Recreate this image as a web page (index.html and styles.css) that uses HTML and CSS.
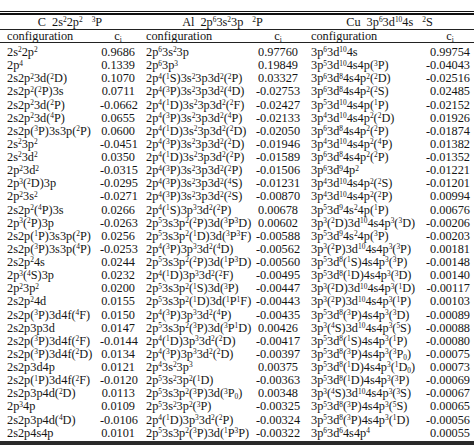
FILE: index.html
```html
<!DOCTYPE html>
<html>
<head>
<meta charset="utf-8">
<link rel="stylesheet" href="styles.css">
</head>
<body>
<div class="sheet">
  <div class="rule-top"></div>
  <div class="groups">
    <div class="grp">C<span class="gap"></span>2s<sup>2</sup>2p<sup>2</sup><span class="gap2"></span><sup>3</sup>P</div>
    <div class="grp">Al<span class="gap"></span>2p<sup>6</sup>3s<sup>2</sup>3p<span class="gap2"></span><sup>2</sup>P</div>
    <div class="grp">Cu<span class="gap"></span>3p<sup>6</sup>3d<sup>10</sup>4s<span class="gap2"></span><sup>2</sup>S</div>
  </div>
  <div class="row head">
    <div class="cfg">configuration</div><div class="ci"><span class="cih">c<sub>i</sub></span></div>
    <div class="cfg">configuration</div><div class="ci"><span class="cih w">c<sub>i</sub></span></div>
    <div class="cfg">configuration</div><div class="ci"><span class="cih w">c<sub>i</sub></span></div>
  </div>
  <div class="body">
    <div class="row"><div class="cfg">2s<sup>2</sup>2p<sup>2</sup></div><div class="ci">0.9686</div><div class="cfg">2p<sup>6</sup>3s<sup>2</sup>3p</div><div class="ci">0.97760</div><div class="cfg">3p<sup>6</sup>3d<sup>10</sup>4s</div><div class="ci">0.99754</div></div>
    <div class="row"><div class="cfg">2p<sup>4</sup></div><div class="ci">0.1339</div><div class="cfg">2p<sup>6</sup>3p<sup>3</sup></div><div class="ci">0.19849</div><div class="cfg">3p<sup>5</sup>3d<sup>10</sup>4s4p(<sup>3</sup>P)</div><div class="ci">-0.04043</div></div>
    <div class="row"><div class="cfg">2s2p<sup>2</sup>3d(<sup>2</sup>D)</div><div class="ci">0.1070</div><div class="cfg">2p<sup>4</sup>(<sup>1</sup>S)3s<sup>2</sup>3p3d<sup>2</sup>(<sup>2</sup>P)</div><div class="ci">0.03327</div><div class="cfg">3p<sup>6</sup>3d<sup>8</sup>4s4p<sup>2</sup>(<sup>2</sup>D)</div><div class="ci">-0.02516</div></div>
    <div class="row"><div class="cfg">2s2p<sup>2</sup>(<sup>2</sup>P)3s</div><div class="ci">0.0711</div><div class="cfg">2p<sup>4</sup>(<sup>3</sup>P)3s<sup>2</sup>3p3d<sup>2</sup>(<sup>4</sup>D)</div><div class="ci">-0.02753</div><div class="cfg">3p<sup>6</sup>3d<sup>8</sup>4s4p<sup>2</sup>(<sup>2</sup>S)</div><div class="ci">0.02485</div></div>
    <div class="row"><div class="cfg">2s2p<sup>2</sup>3d(<sup>2</sup>P)</div><div class="ci">-0.0662</div><div class="cfg">2p<sup>4</sup>(<sup>1</sup>D)3s<sup>2</sup>3p3d<sup>2</sup>(<sup>2</sup>F)</div><div class="ci">-0.02427</div><div class="cfg">3p<sup>5</sup>3d<sup>10</sup>4s4p(<sup>1</sup>P)</div><div class="ci">-0.02152</div></div>
    <div class="row"><div class="cfg">2s2p<sup>2</sup>3d(<sup>4</sup>P)</div><div class="ci">0.0655</div><div class="cfg">2p<sup>4</sup>(<sup>3</sup>P)3s<sup>2</sup>3p3d<sup>2</sup>(<sup>4</sup>P)</div><div class="ci">-0.02133</div><div class="cfg">3p<sup>4</sup>3d<sup>10</sup>4s4p<sup>2</sup>(<sup>2</sup>D)</div><div class="ci">0.01926</div></div>
    <div class="row"><div class="cfg">2s2p(<sup>3</sup>P)3s3p(<sup>2</sup>P)</div><div class="ci">0.0600</div><div class="cfg">2p<sup>4</sup>(<sup>1</sup>D)3s<sup>2</sup>3p3d<sup>2</sup>(<sup>2</sup>D)</div><div class="ci">-0.02050</div><div class="cfg">3p<sup>6</sup>3d<sup>8</sup>4s4p<sup>2</sup>(<sup>2</sup>P)</div><div class="ci">-0.01874</div></div>
    <div class="row"><div class="cfg">2s<sup>2</sup>3p<sup>2</sup></div><div class="ci">-0.0451</div><div class="cfg">2p<sup>4</sup>(<sup>3</sup>P)3s<sup>2</sup>3p3d<sup>2</sup>(<sup>2</sup>D)</div><div class="ci">-0.01946</div><div class="cfg">3p<sup>4</sup>3d<sup>10</sup>4s4p<sup>2</sup>(<sup>4</sup>P)</div><div class="ci">0.01382</div></div>
    <div class="row"><div class="cfg">2s<sup>2</sup>3d<sup>2</sup></div><div class="ci">0.0350</div><div class="cfg">2p<sup>4</sup>(<sup>1</sup>D)3s<sup>2</sup>3p3d<sup>2</sup>(<sup>2</sup>P)</div><div class="ci">-0.01589</div><div class="cfg">3p<sup>6</sup>3d<sup>8</sup>4s4p<sup>2</sup>(<sup>2</sup>P)</div><div class="ci">-0.01352</div></div>
    <div class="row"><div class="cfg">2p<sup>2</sup>3d<sup>2</sup></div><div class="ci">-0.0315</div><div class="cfg">2p<sup>4</sup>(<sup>3</sup>P)3s<sup>2</sup>3p3d<sup>2</sup>(<sup>2</sup>P)</div><div class="ci">-0.01506</div><div class="cfg">3p<sup>6</sup>3d<sup>9</sup>4p<sup>2</sup></div><div class="ci">-0.01221</div></div>
    <div class="row"><div class="cfg">2p<sup>3</sup>(<sup>2</sup>D)3p</div><div class="ci">-0.0295</div><div class="cfg">2p<sup>4</sup>(<sup>3</sup>P)3s<sup>2</sup>3p3d<sup>2</sup>(<sup>4</sup>S)</div><div class="ci">-0.01231</div><div class="cfg">3p<sup>4</sup>3d<sup>10</sup>4s4p<sup>2</sup>(<sup>2</sup>S)</div><div class="ci">-0.01201</div></div>
    <div class="row"><div class="cfg">2p<sup>2</sup>3s<sup>2</sup></div><div class="ci">-0.0271</div><div class="cfg">2p<sup>4</sup>(<sup>3</sup>P)3s<sup>2</sup>3p3d<sup>2</sup>(<sup>2</sup>S)</div><div class="ci">-0.00870</div><div class="cfg">3p<sup>4</sup>3d<sup>10</sup>4s4p<sup>2</sup>(<sup>2</sup>P)</div><div class="ci">0.00994</div></div>
    <div class="row"><div class="cfg">2s2p<sup>2</sup>(<sup>4</sup>P)3s</div><div class="ci">0.0266</div><div class="cfg">2p<sup>4</sup>(<sup>1</sup>S)3p<sup>3</sup>3d<sup>2</sup>(<sup>2</sup>P)</div><div class="ci">0.00678</div><div class="cfg">3p<sup>5</sup>3d<sup>9</sup>4s<sup>2</sup>4p(<sup>1</sup>P)</div><div class="ci">0.00676</div></div>
    <div class="row"><div class="cfg">2p<sup>3</sup>(<sup>2</sup>P)3p</div><div class="ci">-0.0263</div><div class="cfg">2p<sup>5</sup>3s3p<sup>2</sup>(<sup>2</sup>P)3d(<sup>3</sup>P<sup>3</sup>D)</div><div class="ci">0.00602</div><div class="cfg">3p<sup>3</sup>(<sup>2</sup>D)3d<sup>10</sup>4s4p<sup>3</sup>(<sup>3</sup>D)</div><div class="ci">-0.00206</div></div>
    <div class="row"><div class="cfg">2s2p(<sup>1</sup>P)3s3p(<sup>2</sup>P)</div><div class="ci">0.0256</div><div class="cfg">2p<sup>5</sup>3s3p<sup>2</sup>(<sup>1</sup>D)3d(<sup>3</sup>P<sup>3</sup>F)</div><div class="ci">-0.00588</div><div class="cfg">3p<sup>5</sup>3d<sup>9</sup>4s<sup>2</sup>4p(<sup>3</sup>P)</div><div class="ci">-0.00203</div></div>
    <div class="row"><div class="cfg">2s2p(<sup>3</sup>P)3s3p(<sup>4</sup>P)</div><div class="ci">-0.0253</div><div class="cfg">2p<sup>4</sup>(<sup>3</sup>P)3p<sup>3</sup>3d<sup>2</sup>(<sup>4</sup>D)</div><div class="ci">-0.00562</div><div class="cfg">3p<sup>3</sup>(<sup>2</sup>P)3d<sup>10</sup>4s4p<sup>3</sup>(<sup>3</sup>P)</div><div class="ci">0.00181</div></div>
    <div class="row"><div class="cfg">2s2p<sup>2</sup>4s</div><div class="ci">0.0244</div><div class="cfg">2p<sup>5</sup>3s3p<sup>2</sup>(<sup>2</sup>P)3d(<sup>1</sup>P<sup>3</sup>D)</div><div class="ci">-0.00560</div><div class="cfg">3p<sup>5</sup>3d<sup>8</sup>(<sup>1</sup>S)4s4p<sup>3</sup>(<sup>3</sup>P)</div><div class="ci">-0.00148</div></div>
    <div class="row"><div class="cfg">2p<sup>3</sup>(<sup>4</sup>S)3p</div><div class="ci">0.0232</div><div class="cfg">2p<sup>4</sup>(<sup>1</sup>D)3p<sup>3</sup>3d<sup>2</sup>(<sup>2</sup>F)</div><div class="ci">-0.00495</div><div class="cfg">3p<sup>5</sup>3d<sup>8</sup>(<sup>1</sup>D)4s4p<sup>3</sup>(<sup>3</sup>D)</div><div class="ci">0.00140</div></div>
    <div class="row"><div class="cfg">2p<sup>2</sup>3p<sup>2</sup></div><div class="ci">0.0200</div><div class="cfg">2p<sup>5</sup>3s3p<sup>2</sup>(<sup>1</sup>S)3d(<sup>3</sup>P)</div><div class="ci">-0.00447</div><div class="cfg">3p<sup>3</sup>(<sup>2</sup>D)3d<sup>10</sup>4s4p<sup>3</sup>(<sup>1</sup>D)</div><div class="ci">-0.00117</div></div>
    <div class="row"><div class="cfg">2s2p<sup>2</sup>4d</div><div class="ci">0.0155</div><div class="cfg">2p<sup>5</sup>3s3p<sup>2</sup>(<sup>1</sup>D)3d(<sup>1</sup>P<sup>1</sup>F)</div><div class="ci">-0.00443</div><div class="cfg">3p<sup>3</sup>(<sup>2</sup>P)3d<sup>10</sup>4s4p<sup>3</sup>(<sup>1</sup>P)</div><div class="ci">0.00103</div></div>
    <div class="row"><div class="cfg">2s2p(<sup>3</sup>P)3d4f(<sup>4</sup>F)</div><div class="ci">0.0150</div><div class="cfg">2p<sup>4</sup>(<sup>3</sup>P)3p<sup>3</sup>3d<sup>2</sup>(<sup>4</sup>P)</div><div class="ci">-0.00435</div><div class="cfg">3p<sup>5</sup>3d<sup>8</sup>(<sup>3</sup>P)4s4p<sup>3</sup>(<sup>3</sup>D)</div><div class="ci">-0.00089</div></div>
    <div class="row"><div class="cfg">2s2p3p3d</div><div class="ci">0.0147</div><div class="cfg">2p<sup>5</sup>3s3p<sup>2</sup>(<sup>3</sup>P)3d(<sup>3</sup>P<sup>1</sup>D)</div><div class="ci">0.00426</div><div class="cfg">3p<sup>3</sup>(<sup>4</sup>S)3d<sup>10</sup>4s4p<sup>3</sup>(<sup>5</sup>S)</div><div class="ci">-0.00088</div></div>
    <div class="row"><div class="cfg">2s2p(<sup>3</sup>P)3d4f(<sup>2</sup>F)</div><div class="ci">-0.0144</div><div class="cfg">2p<sup>4</sup>(<sup>1</sup>D)3p<sup>3</sup>3d<sup>2</sup>(<sup>2</sup>D)</div><div class="ci">-0.00417</div><div class="cfg">3p<sup>5</sup>3d<sup>8</sup>(<sup>1</sup>S)4s4p<sup>3</sup>(<sup>1</sup>P)</div><div class="ci">-0.00080</div></div>
    <div class="row"><div class="cfg">2s2p(<sup>3</sup>P)3d4f(<sup>2</sup>D)</div><div class="ci">0.0134</div><div class="cfg">2p<sup>4</sup>(<sup>3</sup>P)3p<sup>3</sup>3d<sup>2</sup>(<sup>2</sup>D)</div><div class="ci">-0.00397</div><div class="cfg">3p<sup>5</sup>3d<sup>8</sup>(<sup>3</sup>P)4s4p<sup>3</sup>(<sup>3</sup>P<sub>0</sub>)</div><div class="ci">-0.00075</div></div>
    <div class="row"><div class="cfg">2s2p3d4p</div><div class="ci">0.0121</div><div class="cfg">2p<sup>4</sup>3s<sup>2</sup>3p<sup>3</sup></div><div class="ci">0.00375</div><div class="cfg">3p<sup>5</sup>3d<sup>8</sup>(<sup>1</sup>D)4s4p<sup>3</sup>(<sup>1</sup>D<sub>0</sub>)</div><div class="ci">0.00073</div></div>
    <div class="row"><div class="cfg">2s2p(<sup>1</sup>P)3d4f(<sup>2</sup>F)</div><div class="ci">-0.0120</div><div class="cfg">2p<sup>5</sup>3s<sup>2</sup>3p<sup>2</sup>(<sup>1</sup>D)</div><div class="ci">-0.00363</div><div class="cfg">3p<sup>5</sup>3d<sup>8</sup>(<sup>1</sup>D)4s4p<sup>3</sup>(<sup>3</sup>P)</div><div class="ci">-0.00069</div></div>
    <div class="row"><div class="cfg">2s2p3p4d(<sup>2</sup>D)</div><div class="ci">0.0113</div><div class="cfg">2p<sup>5</sup>3s3p<sup>2</sup>(<sup>3</sup>P)3d(<sup>3</sup>P<sub>0</sub>)</div><div class="ci">0.00348</div><div class="cfg">3p<sup>3</sup>(<sup>4</sup>S)3d<sup>10</sup>4s4p<sup>3</sup>(<sup>3</sup>S)</div><div class="ci">-0.00067</div></div>
    <div class="row"><div class="cfg">2p<sup>3</sup>4p</div><div class="ci">0.0109</div><div class="cfg">2p<sup>5</sup>3s<sup>2</sup>3p<sup>2</sup>(<sup>3</sup>P)</div><div class="ci">-0.00325</div><div class="cfg">3p<sup>5</sup>3d<sup>8</sup>(<sup>3</sup>P)4s4p<sup>3</sup>(<sup>5</sup>S)</div><div class="ci">0.00065</div></div>
    <div class="row"><div class="cfg">2s2p3p4d(<sup>4</sup>D)</div><div class="ci">-0.0106</div><div class="cfg">2p<sup>4</sup>(<sup>1</sup>D)3p<sup>3</sup>3d<sup>2</sup>(<sup>2</sup>P)</div><div class="ci">-0.00324</div><div class="cfg">3p<sup>5</sup>3d<sup>8</sup>(<sup>3</sup>P)4s4p<sup>3</sup>(<sup>1</sup>D)</div><div class="ci">-0.00056</div></div>
    <div class="row"><div class="cfg">2s2p4s4p</div><div class="ci">0.0101</div><div class="cfg">2p<sup>5</sup>3s3p<sup>2</sup>(<sup>3</sup>P)3d(<sup>1</sup>P<sup>3</sup>P)</div><div class="ci">-0.00322</div><div class="cfg">3p<sup>6</sup>3d<sup>6</sup>4s4p<sup>4</sup></div><div class="ci">0.00055</div></div>
  </div>
  <div class="rule-bottom"></div>
</div>
</body>
</html>
```
FILE: styles.css
```css
html, body {
  margin: 0;
  padding: 0;
  background: #ffffff;
}

.sheet {
  width: 474px;
  padding-top: 11px;
  font-family: "Liberation Serif", "Times New Roman", serif;
  font-size: 12.3px;
  color: #151515;
}

.rule-top {
  height: 1px;
  border-top: 1px solid #111;
  border-bottom: 2px solid #111;
}

.groups {
  display: grid;
  grid-template-columns: 140px 165px 169px;
  height: 14px;
  border-bottom: 1px solid #222;
}

.grp {
  text-align: center;
  line-height: 15px;
  white-space: nowrap;
}

.gap { display: inline-block; width: 6px; }
.gap2 { display: inline-block; width: 9px; }

.row {
  display: grid;
  grid-template-columns: 100px 40px 116px 49px 119px 50px;
  align-items: center;
  white-space: nowrap;
}

.head {
  height: 12px;
  line-height: 12px;
  border-bottom: 1px solid #222;
}

.body {
  padding-top: 3px;
}

.body .row {
  height: 13.13px;
  line-height: 13px;
}

.cfg:nth-child(1) { padding-left: 7px; }
.cfg:nth-child(3) { padding-left: 6px; }
.cfg:nth-child(5) { padding-left: 6px; }

.ci { text-align: right; }
.ci:nth-child(2) { padding-right: 5px; }
.ci:nth-child(4) { padding-right: 7px; }
.ci:nth-child(6) { padding-right: 4px; }

.cih {
  display: inline-block;
  width: 34px;
  text-align: center;
}
.cih.w { width: 40px; }

sup, sub {
  font-size: 0.6em;
  line-height: 0;
  vertical-align: baseline;
  position: relative;
}
sup { top: -0.5em; }
sub { top: 0.25em; }

.rule-bottom {
  margin-top: 1px;
  height: 4px;
  background: #2a2a2a;
}
```
